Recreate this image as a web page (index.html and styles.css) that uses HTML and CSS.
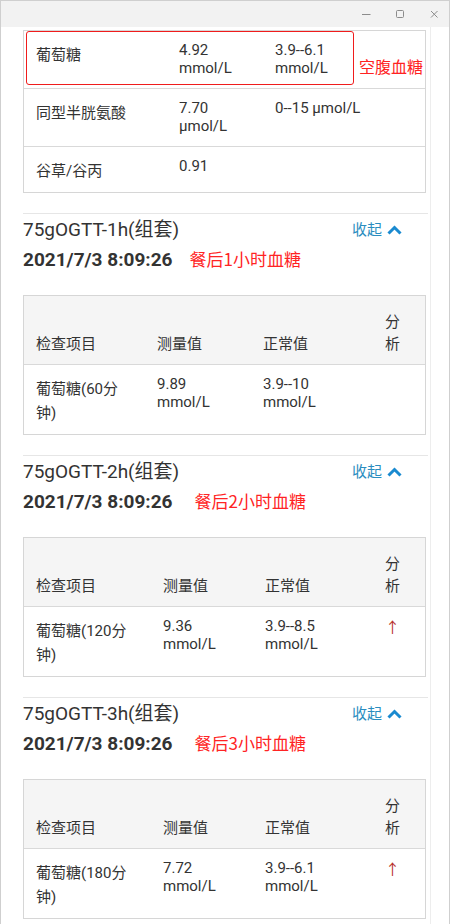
FILE: index.html
```html
<!DOCTYPE html>
<html lang="zh-CN">
<head>
  <meta charset="UTF-8">
  <meta name="viewport" content="width=device-width, initial-scale=1.0">
  <title>检查报告</title>
  <link rel="stylesheet" href="styles.css">
</head>
<body>
  <div class="window">
    <div class="titlebar">
      <span class="tb-btn">
        <svg width="10" height="10" viewBox="0 0 10 10"><path d="M1 5.5h8.5" stroke="#8c8c8c" stroke-width="1" fill="none"/></svg>
      </span>
      <span class="tb-btn">
        <svg width="10" height="10" viewBox="0 0 10 10"><rect x="1.5" y="1.5" width="7" height="7" rx="1" stroke="#8c8c8c" stroke-width="1" fill="none"/></svg>
      </span>
      <span class="tb-btn">
        <svg width="10" height="10" viewBox="0 0 10 10"><path d="M2 2l6.5 6.5M8.5 2L2 8.5" stroke="#8c8c8c" stroke-width="1" fill="none"/></svg>
      </span>
    </div>

    <div class="main">
      <div class="scroll">
        <div class="marked">
          <table class="grid g-fast">
            <colgroup>
              <col class="c-name"><col class="c-value"><col class="c-range"><col class="c-flag">
            </colgroup>
            <tbody>
              <tr>
                <td class="name">葡萄糖</td>
                <td>4.92<br>mmol/L</td>
                <td>3.9--6.1<br>mmol/L</td>
                <td></td>
              </tr>
              <tr>
                <td class="name">同型半胱氨酸</td>
                <td>7.70<br>μmol/L</td>
                <td>0--15 μmol/L</td>
                <td></td>
              </tr>
              <tr>
                <td class="name">谷草/谷丙</td>
                <td>0.91</td>
                <td></td>
                <td></td>
              </tr>
            </tbody>
          </table>
          <div class="mark-box"></div>
          <div class="mark-side">空腹血糖</div>
        </div>

        <section class="group">
          <div class="group-head">
            <div class="group-title">75gOGTT-1h(组套)</div>
            <div class="toggle">收起
              <svg width="15" height="10" viewBox="0 0 15 10"><path d="M1.5 8.5L7.5 2.5l6 6" stroke="#1a8ad0" stroke-width="3" fill="none"/></svg>
            </div>
          </div>
          <div class="group-time">2021/7/3 8:09:26<span class="note">餐后1小时血糖</span></div>
          <table class="grid g-1h">
            <colgroup>
              <col class="c-name"><col class="c-value"><col class="c-range"><col class="c-flag">
            </colgroup>
            <thead>
              <tr><th>检查项目</th><th>测量值</th><th>正常值</th><th>分析</th></tr>
            </thead>
            <tbody>
              <tr>
                <td class="name">葡萄糖(60分钟)</td>
                <td>9.89<br>mmol/L</td>
                <td>3.9--10<br>mmol/L</td>
                <td class="flag"></td>
              </tr>
            </tbody>
          </table>
        </section>

        <section class="group">
          <div class="group-head">
            <div class="group-title">75gOGTT-2h(组套)</div>
            <div class="toggle">收起
              <svg width="15" height="10" viewBox="0 0 15 10"><path d="M1.5 8.5L7.5 2.5l6 6" stroke="#1a8ad0" stroke-width="3" fill="none"/></svg>
            </div>
          </div>
          <div class="group-time">2021/7/3 8:09:26<span class="note note-wide">餐后2小时血糖</span></div>
          <table class="grid g-later">
            <colgroup>
              <col class="c-name"><col class="c-value"><col class="c-range"><col class="c-flag">
            </colgroup>
            <thead>
              <tr><th>检查项目</th><th>测量值</th><th>正常值</th><th>分析</th></tr>
            </thead>
            <tbody>
              <tr>
                <td class="name">葡萄糖(120分钟)</td>
                <td>9.36<br>mmol/L</td>
                <td>3.9--8.5<br>mmol/L</td>
                <td class="flag">↑</td>
              </tr>
            </tbody>
          </table>
        </section>

        <section class="group">
          <div class="group-head">
            <div class="group-title">75gOGTT-3h(组套)</div>
            <div class="toggle">收起
              <svg width="15" height="10" viewBox="0 0 15 10"><path d="M1.5 8.5L7.5 2.5l6 6" stroke="#1a8ad0" stroke-width="3" fill="none"/></svg>
            </div>
          </div>
          <div class="group-time">2021/7/3 8:09:26<span class="note note-wide">餐后3小时血糖</span></div>
          <table class="grid g-later">
            <colgroup>
              <col class="c-name"><col class="c-value"><col class="c-range"><col class="c-flag">
            </colgroup>
            <thead>
              <tr><th>检查项目</th><th>测量值</th><th>正常值</th><th>分析</th></tr>
            </thead>
            <tbody>
              <tr>
                <td class="name">葡萄糖(180分钟)</td>
                <td>7.72<br>mmol/L</td>
                <td>3.9--6.1<br>mmol/L</td>
                <td class="flag">↑</td>
              </tr>
            </tbody>
          </table>
        </section>
      </div>
    </div>
  </div>
</body>
</html>
```

FILE: styles.css
```css
body {
  margin: 0;
  font-family: Roboto, "Noto Sans CJK SC", sans-serif;
  color: #333;
  background: #fff;
}
.window {
  height: 924px;
  box-sizing: border-box;
  border: 1px solid #cfcfcf;
  border-bottom: 0;
  display: flex;
  flex-direction: column;
  overflow: hidden;
}
.titlebar {
  height: 26px;
  flex: none;
  background: #f2f2f2;
  display: flex;
  justify-content: flex-end;
  align-items: center;
  gap: 4px;
}
.tb-btn {
  width: 30px;
  height: 26px;
  display: flex;
  align-items: center;
  justify-content: center;
}
.main {
  flex: 1;
  display: flex;
}
.scroll {
  width: 430px;
  box-sizing: border-box;
  padding: 3px 2px 0 22px;
  border-right: 1px solid #ededed;
}

/* tables */
.grid {
  width: 403px;
  table-layout: fixed;
  border-collapse: separate;
  border-spacing: 0;
  border: 1px solid #d6d6d6;
  font-size: 15px;
}
.grid th {
  background: #f5f5f5;
  font-weight: normal;
  text-align: left;
  vertical-align: bottom;
  padding: 15px 12px 9px;
  line-height: 22px;
  border-bottom: 1px solid #d9d9d9;
}
.grid td {
  vertical-align: top;
  padding: 10px 12px 11px;
  line-height: 18px;
}
.grid tbody tr + tr td {
  border-top: 1px solid #d9d9d9;
}
.grid td.name {
  padding-top: 12px;
  padding-bottom: 9px;
  line-height: 24px;
}
.grid td.flag {
  color: #b8322c;
  font-family: "Noto Sans CJK SC", sans-serif;
  line-height: 24px;
  padding-top: 8px;
}
.g-fast .c-name { width: 143px; }
.g-fast .c-value { width: 96px; }
.g-fast .c-range { width: 122px; }
.g-fast .c-flag { width: 40px; }
.g-1h .c-name { width: 121px; }
.g-1h .c-value { width: 106px; }
.g-1h .c-range { width: 122px; }
.g-1h .c-flag { width: 52px; }
.g-later .c-name { width: 127px; }
.g-later .c-value { width: 102px; }
.g-later .c-range { width: 120px; }
.g-later .c-flag { width: 52px; }

/* red annotations */
.marked {
  position: relative;
}
.mark-box {
  position: absolute;
  left: 3px;
  top: 1px;
  width: 328px;
  height: 54px;
  box-sizing: border-box;
  border: 1px solid #f01c1c;
  border-radius: 3px;
}
.mark-side {
  position: absolute;
  left: 336px;
  top: 25px;
  font-size: 16px;
  line-height: 22px;
  color: #ff2222;
  font-family: "Noto Sans CJK SC", sans-serif;
}
.note {
  margin-left: 17px;
  color: #ff2424;
  font-size: 17px;
  font-weight: normal;
  font-family: "Noto Sans CJK SC", sans-serif;
}
.note-wide {
  margin-left: 22px;
}

/* groups */
.group {
  margin-top: 20px;
  border-top: 1px solid #e6e6e6;
  padding-top: 1px;
}
.group-head {
  display: flex;
  justify-content: space-between;
  align-items: flex-start;
}
.group-title {
  font-size: 19px;
  line-height: 29px;
  font-weight: 400;
}
.toggle {
  display: flex;
  align-items: center;
  gap: 5px;
  padding-right: 26px;
  padding-top: 1px;
  font-size: 15px;
  line-height: 28px;
  color: #2a8dc0;
}
.group-time {
  font-size: 19px;
  font-weight: 700;
  line-height: 29px;
  margin-bottom: 21px;
}
```
